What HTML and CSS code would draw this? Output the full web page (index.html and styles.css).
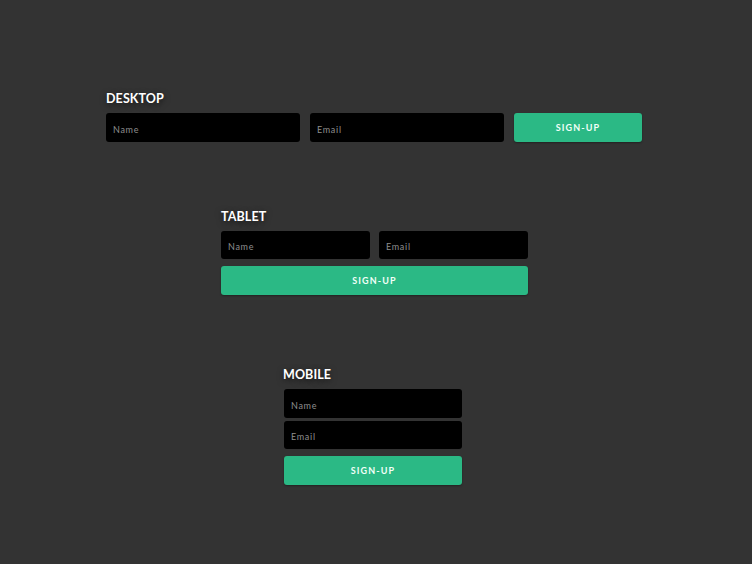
FILE: index.html
```html
<!DOCTYPE html>
<html>
<head>
<meta charset="utf-8">
<link rel="stylesheet" href="styles.css">
</head>
<body>
<main class="page">
  <section class="block desktop">
    <h2 class="label">DESKTOP</h2>
    <div class="row">
      <div class="field f-wide">Name</div>
      <div class="field f-wide">Email</div>
      <div class="btn b-desk">SIGN-UP</div>
    </div>
  </section>
  <section class="block tablet">
    <h2 class="label">TABLET</h2>
    <div class="row r-tab">
      <div class="field f-tab">Name</div>
      <div class="field f-tab">Email</div>
    </div>
    <div class="btn b-tab">SIGN-UP</div>
  </section>
  <section class="block mobile">
    <h2 class="label l-mob">MOBILE</h2>
    <div class="field f-mob">Name</div>
    <div class="field f-mob f-mob2">Email</div>
    <div class="btn b-mob">SIGN-UP</div>
  </section>
</main>
</body>
</html>
```
FILE: styles.css
```css
html, body { margin: 0; padding: 0; }
body {
  background: #333333;
  width: 752px;
  height: 564px;
  overflow: hidden;
  font-family: "Lato", "Liberation Sans", sans-serif;
}
.page { padding-top: 92px; }
.block { display: flex; flex-direction: column; align-items: flex-start; }
.label {
  margin: 0 0 7px 0;
  font-size: 12.5px;
  line-height: 14px;
  font-weight: 700;
  color: #ffffff;
  letter-spacing: 0.1px;
  text-shadow: 0 2px 6px rgba(0,0,0,0.6);
}
.row { display: flex; gap: 10px; }
.field {
  background: #000;
  border-radius: 3px;
  color: #8e8e8e;
  font-size: 9px;
  letter-spacing: 0.7px;
  display: flex;
  align-items: center;
  padding: 3px 0 0 7px;
  box-sizing: border-box;
  height: 29px;
}
.btn {
  background: #2bb985;
  border-radius: 3px;
  color: #f2fff8;
  font-size: 9px;
  font-weight: 700;
  letter-spacing: 1.1px;
  display: flex;
  align-items: center;
  justify-content: center;
  height: 29px;
  box-shadow: 0 1px 2px rgba(0,0,0,0.35);
}
.desktop { margin-left: 106px; }
.f-wide { width: 194px; }
.b-desk { width: 128px; }
.tablet { margin-left: 221px; margin-top: 68px; }
.r-tab { gap: 9px; }
.f-tab { width: 149px; height: 28px; }
.b-tab { width: 307px; margin-top: 7px; }
.mobile { margin-left: 284px; margin-top: 73px; }
.l-mob { margin-left: -1px; }
.f-mob { width: 178px; }
.f-mob2 { margin-top: 3px; height: 28px; }
.b-mob { width: 178px; margin-top: 7px; }
```
